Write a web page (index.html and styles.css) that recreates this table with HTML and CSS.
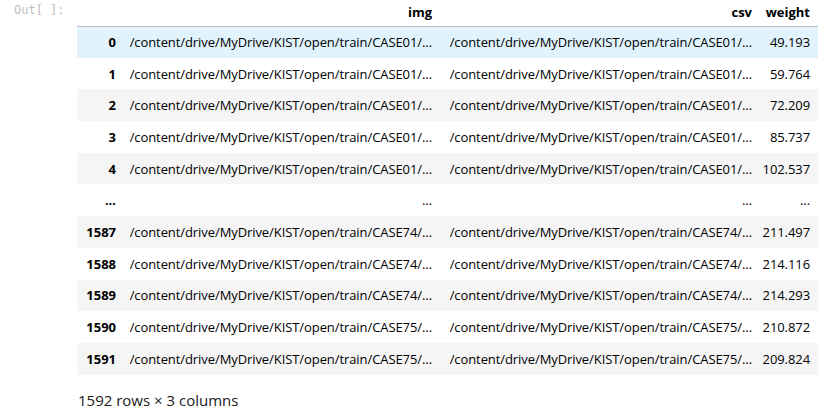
FILE: index.html
```html
<!DOCTYPE html>
<html lang="en">
<head>
    <meta charset="UTF-8">
    <title>Output</title>
    <link rel="stylesheet" href="styles.css">
</head>
<body>
    <div class="output">
        <div class="prompt">Out[ ]:</div>
        <div class="result">
            <table class="dataframe">
                <thead>
                    <tr>
                        <th class="idx"></th>
                        <th class="col-img">img</th>
                        <th class="col-csv">csv</th>
                        <th class="col-w">weight</th>
                    </tr>
                </thead>
                <tbody>
                    <tr class="hover"><th>0</th><td>/content/drive/MyDrive/KIST/open/train/CASE01/...</td><td>/content/drive/MyDrive/KIST/open/train/CASE01/...</td><td>49.193</td></tr>
                    <tr><th>1</th><td>/content/drive/MyDrive/KIST/open/train/CASE01/...</td><td>/content/drive/MyDrive/KIST/open/train/CASE01/...</td><td>59.764</td></tr>
                    <tr><th>2</th><td>/content/drive/MyDrive/KIST/open/train/CASE01/...</td><td>/content/drive/MyDrive/KIST/open/train/CASE01/...</td><td>72.209</td></tr>
                    <tr><th>3</th><td>/content/drive/MyDrive/KIST/open/train/CASE01/...</td><td>/content/drive/MyDrive/KIST/open/train/CASE01/...</td><td>85.737</td></tr>
                    <tr><th>4</th><td>/content/drive/MyDrive/KIST/open/train/CASE01/...</td><td>/content/drive/MyDrive/KIST/open/train/CASE01/...</td><td>102.537</td></tr>
                    <tr><th>...</th><td>...</td><td>...</td><td>...</td></tr>
                    <tr><th>1587</th><td>/content/drive/MyDrive/KIST/open/train/CASE74/...</td><td>/content/drive/MyDrive/KIST/open/train/CASE74/...</td><td>211.497</td></tr>
                    <tr><th>1588</th><td>/content/drive/MyDrive/KIST/open/train/CASE74/...</td><td>/content/drive/MyDrive/KIST/open/train/CASE74/...</td><td>214.116</td></tr>
                    <tr><th>1589</th><td>/content/drive/MyDrive/KIST/open/train/CASE74/...</td><td>/content/drive/MyDrive/KIST/open/train/CASE74/...</td><td>214.293</td></tr>
                    <tr><th>1590</th><td>/content/drive/MyDrive/KIST/open/train/CASE75/...</td><td>/content/drive/MyDrive/KIST/open/train/CASE75/...</td><td>210.872</td></tr>
                    <tr><th>1591</th><td>/content/drive/MyDrive/KIST/open/train/CASE75/...</td><td>/content/drive/MyDrive/KIST/open/train/CASE75/...</td><td>209.824</td></tr>
                </tbody>
            </table>
            <p class="shape">1592 rows × 3 columns</p>
        </div>
    </div>
</body>
</html>
```

FILE: styles.css
```css
* {
    margin: 0;
    padding: 0;
    box-sizing: border-box;
}

body {
    background: #ffffff;
    color: #000000;
    font-family: "Open Sans", "Noto Sans", sans-serif;
    font-size: 13px;
}

.output {
    display: flex;
}

.prompt {
    inline-size: 77px;
    padding: 3px 0 0 14px;
    font-family: "DejaVu Sans Mono", monospace;
    font-size: 12px;
    color: #bdbdbd;
}

.result {
    inline-size: 741px;
}

.dataframe {
    inline-size: 741px;
    border-collapse: collapse;
    table-layout: fixed;
}

.dataframe th,
.dataframe td {
    padding: 0 8px 0 0;
    text-align: end;
    white-space: nowrap;
    block-size: 31.7px;
    font-weight: 400;
}

.dataframe td {
    letter-spacing: -0.08px;
}

.dataframe thead th {
    block-size: 26px;
    font-weight: 700;
    border-block-end: 1px solid #bdbdbd;
    vertical-align: middle;
    padding-block-end: 2px;
}

.dataframe tbody th {
    font-weight: 700;
}

.idx { inline-size: 47px; }
.col-img { inline-size: 316px; }
.col-csv { inline-size: 320px; }
.col-w { inline-size: 58px; }

.dataframe tbody tr:nth-child(odd) {
    background: #f5f5f5;
}

.dataframe tbody tr.hover {
    background: #e1f3fc;
}

.shape {
    padding: 15px 0 0 1px;
    font-size: 15px;
    color: #212121;
}
```
